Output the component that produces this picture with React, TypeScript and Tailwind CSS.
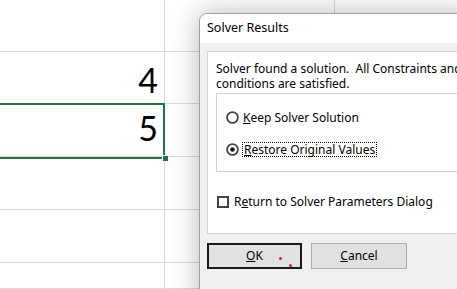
import React from "react";

const ui = { fontFamily: '"Noto Sans", "Liberation Sans", sans-serif' };
const digit = { fontFamily: 'Lato, "Open Sans", sans-serif' };

function Radio({ checked }: { checked?: boolean }) {
  return (
    <svg width="13" height="13" viewBox="0 0 13 13" className="shrink-0">
      <circle cx="6.5" cy="6.5" r="5.4" fill="white" stroke="#444" strokeWidth="1.8" />
      {checked && <circle cx="6.5" cy="6.5" r="2.3" fill="#1a1a1a" />}
    </svg>
  );
}

export default function App() {
  const rows = [52, 52, 53, 53, 53, 26];
  return (
    <div className="relative w-[457px] h-[289px] overflow-hidden bg-white">
      {/* spreadsheet grid */}
      <div className="flex flex-col">
        {rows.map((h, i) => (
          <div key={i} className="flex border-b border-[#d9d9d9]" style={{ height: h }}>
            <div className="w-[165px] shrink-0 border-r border-[#d9d9d9] flex items-center justify-end pr-[6px]">
              {i === 1 && (
                <span className="text-[34px] leading-none text-black mt-[4px]" style={digit}>4</span>
              )}
              {i === 2 && (
                <span className="text-[34px] leading-none text-black mt-[-4px]" style={digit}>5</span>
              )}
            </div>
            <div className="w-[170px] shrink-0 border-r border-[#d9d9d9]" />
          </div>
        ))}
      </div>
      {/* selection */}
      <div className="absolute left-[-4px] top-[103px] w-[169px] h-[56px] border-2 border-[#217346]" />
      <div className="absolute left-[162px] top-[155px] w-[5px] h-[5px] bg-[#217346] border border-white box-content" />

      {/* dialog */}
      <div
        className="absolute left-[199px] top-[13px] w-[280px] h-[300px] bg-[#f0f0f0] border border-[#a0a0a0] rounded-tl-[8px] shadow-[0_0_28px_rgba(0,0,0,0.28)] overflow-hidden"
        style={ui}
      >
        <div className="h-[29px] bg-white flex items-center pl-[7px] text-[12.5px] text-black">Solver Results</div>
        <div className="pl-[7px] pt-[8px]">
          <div className="h-[183px] bg-white border border-[#c8d4e0] pl-[8px] pt-[9px]">
            <div className="text-[12px] text-black whitespace-nowrap">
              <div className="h-[15px] leading-[15px]">Solver found a solution.&nbsp; All Constraints and optimality</div>
              <div className="h-[15px] leading-[15px]">conditions are satisfied.</div>
            </div>
            <div className="mt-[2px] h-[79px] border border-[#c8d4e0] flex flex-col pl-[9px]">
              <div className="flex items-center h-[15px] gap-[4px] mt-[16px] text-[12px] text-black">
                <Radio />
                <span className="leading-[15px]"><u>K</u>eep Solver Solution</span>
              </div>
              <div className="flex items-center h-[15px] gap-[3px] mt-[17px] text-[12px] text-black">
                <Radio checked />
                <span className="border border-dotted border-black px-[1px] leading-[13px]"><u>R</u>estore Original Values</span>
              </div>
            </div>
            <div className="flex items-center h-[15px] gap-[5px] mt-[22px] pl-[1px] text-[12px] text-black">
              <div className="w-[12px] h-[12px] border-2 border-[#444] bg-white" />
              <span className="leading-[15px]">R<u>e</u>turn to Solver Parameters Dialog</span>
            </div>
          </div>
          <div className="flex gap-[9px] mt-[9px]">
            <div className="w-[95px] h-[26px] border-2 border-[#1a1a1a] bg-[#e1e1e1] flex items-center justify-center text-[12px] text-black">
              <span><u>O</u>K</span>
            </div>
            <div className="w-[96px] h-[26px] border border-[#adadad] bg-[#e1e1e1] flex items-center justify-center text-[12px] text-black">
              <span><u>C</u>ancel</span>
            </div>
          </div>
        </div>
      </div>
      {/* red marks */}
      <div className="absolute left-[279px] top-[257px] w-[3px] h-[3px] rounded-full bg-[#e0162b]" />
      <div className="absolute left-[289px] top-[264px] w-[3px] h-[3px] rounded-full bg-[#e0162b]" />
    </div>
  );
}
